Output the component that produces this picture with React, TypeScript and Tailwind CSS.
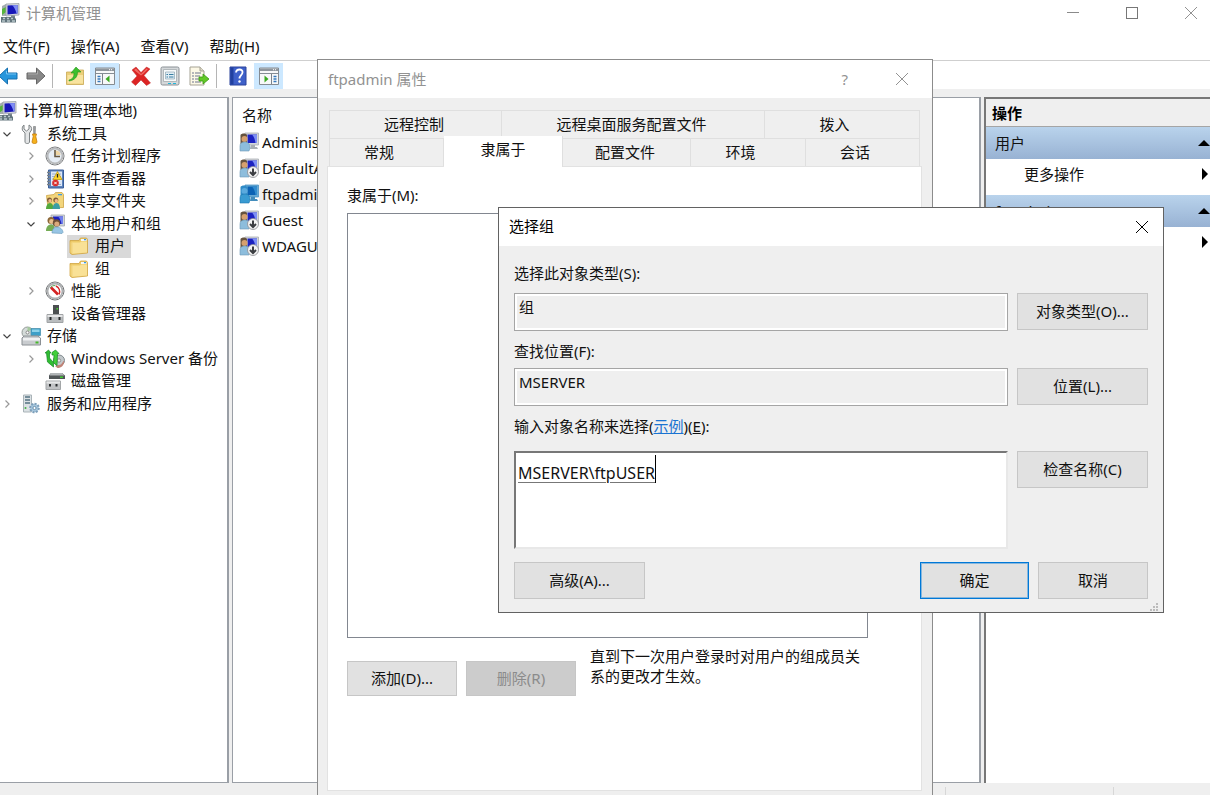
import { useState } from 'react';
import type { ReactNode } from 'react';
import clsx from 'clsx';

type IconProps = { children: ReactNode; className?: string };

function Icon({ children, className }: IconProps) {
  return (
    <svg viewBox="0 0 20 20" aria-hidden="true" className={clsx('h-5 w-5 shrink-0', className)}>
      {children}
    </svg>
  );
}

const ComputerIcon = () => (
  <Icon>
    <path d="M2 3l4-2v12H2z" fill="#a3adaf" />
    <path d="M2 6l4-2v5l-4 3z" fill="#55b53c" />
    <path d="M6 1l13-.5V12L6 13z" fill="#d3d7dc" stroke="#9aa0a8" strokeWidth=".8" />
    <path d="M7.500 2.500l10-.5v8.500l-10 1z" fill="#1717b8" />
    <path d="M12 2.300l5.500-.3v8.500l-1 .1c-1-4-2.500-7-4.500-8.300z" fill="#7f8df5" />
    <path d="M11 12.500h4V15h-4z" fill="#7b878d" />
    <path d="M1 14h13l2 2v3.500H1z" fill="#62757d" />
    <path d="M3 15.500h2m2 0h2m2 0h2M2 18h3m2 0h3m2 0h3" stroke="#b9c7cc" strokeWidth="1.500" />
  </Icon>
);

const ToolsIcon = () => (
  <Icon>
    <path d="M3 1v4l2.500 2L8 5V1c2 1 3 3 2.500 5L8.500 9v9c0 2-4.500 2-4.500 0V9L1.500 6.500C.8 4 1.500 2 3 1z" fill="#e3e5e6" stroke="#7f8486" />
    <path d="M12.500 2.500h2L14.200 10h-1.500z" fill="#9ca1a5" stroke="#777" strokeWidth=".6" />
    <path d="M11.500 10h4l-.7 2.500 1.200 5.500c0 2-5 2-5 0l1.200-5.500z" fill="#f5b21c" stroke="#c57b0c" strokeWidth=".8" />
  </Icon>
);

const ClockIcon = () => (
  <Icon>
    <circle cx="10" cy="10" r="9" fill="#fff" stroke="#77797b" />
    <circle cx="10" cy="10" r="7.500" fill="#e6edf5" stroke="#b8babc" strokeWidth="2" />
    <path d="M11 4.500c3 .3 4.500 2 4.500 4.500H11z" fill="#efd6a4" />
    <path d="M10 4v6.500h5" fill="none" stroke="#665841" strokeWidth="1.600" />
  </Icon>
);

const EventIcon = () => (
  <Icon>
    <path d="M3.500 1h15v18h-15z" fill="#5d83bd" stroke="#3a5f99" />
    <path d="M6 2.500h11V17H6z" fill="#dde7f5" />
    <path d="M7 5h9M7 7.500h9M7 10h9M7 15.500h9" stroke="#9bb0d0" />
    <path d="M12.500 2.500l4.500 8H8z" fill="#fbd529" stroke="#c09205" strokeWidth=".7" />
    <path d="M12.500 5v3.500" stroke="#222" strokeWidth="1.300" />
    <circle cx="10.500" cy="14" r="3.300" fill="#d92c2c" />
    <path d="M9.300 12.800l2.400 2.400m0-2.400l-2.400 2.400" stroke="#fff" />
    <path d="M2 3.500h3m-3 3h3m-3 3h3m-3 3h3m-3 3h3" stroke="#7c8288" strokeWidth="1.300" />
  </Icon>
);

const FolderIcon = () => (
  <Icon>
    <path d="M1 4.500h9l1.500-2.500h6l1 1.500V17L3 18.500 1 17z" fill="#edca67" stroke="#d0a443" strokeWidth=".8" />
    <path d="M12 3h5.500v2H12z" fill="#f4f7fa" />
    <path d="M15 3h2v1.200h-2z" fill="#3c9be0" />
    <path d="M3 6.500h8l1.500-1H18v11L3 17.800z" fill="#f9e196" />
    <path d="M1.500 6l2 1v10.500l-2-1z" fill="#f2d37b" />
  </Icon>
);

const ShareIcon = () => (
  <Icon>
    <path d="M1.500 4.500L9 3.500l1.500-2h6.500l1.500 2v13L3 17z" fill="#f2d57c" stroke="#cda344" strokeWidth=".8" />
    <path d="M13 3h4v1.300h-4z" fill="#3c9be0" />
    <circle cx="4.500" cy="9" r="2.500" fill="#805c37" />
    <circle cx="5" cy="9.800" r="1.700" fill="#edbd89" />
    <circle cx="10.800" cy="9" r="2.500" fill="#805c37" />
    <circle cx="11.300" cy="9.800" r="1.700" fill="#edbd89" />
    <path d="M1 18c0-3 1.500-6 4-6s3.500 3 3.500 6z" fill="#54a93d" />
    <path d="M7.500 18c0-3 1.500-6 4-6s3.500 3 3.500 6z" fill="#3a9ea5" />
  </Icon>
);

const GroupIcon = () => (
  <Icon>
    <path d="M6 1h13.500v11H6z" fill="#d0d4da" stroke="#a3a8ad" strokeWidth=".8" />
    <path d="M8 2.500h10V10H8z" fill="#1b21c0" />
    <path d="M13 2.500h5V10h-1.500c-.5-3-1.500-5.500-3.500-7.500z" fill="#7080ed" />
    <circle cx="6" cy="6.500" r="3.500" fill="#8b6738" />
    <circle cx="6.500" cy="7.500" r="2.400" fill="#eabf8d" />
    <circle cx="11.500" cy="9" r="3.700" fill="#6e4e36" />
    <circle cx="11.800" cy="10" r="2.500" fill="#dba97c" />
    <path d="M1 17c0-4 2-6.500 5-6.500s4 2.500 4 6.500z" fill="#75ac55" />
    <path d="M7 19c0-3.500 2-6 5-6s6 2.500 6 5.500l-1 1z" fill="#98c5e4" stroke="#6497b8" strokeWidth=".6" />
  </Icon>
);

const GaugeIcon = () => (
  <Icon>
    <circle cx="10" cy="10" r="9" fill="#fff" stroke="#6e7173" />
    <circle cx="10" cy="10" r="7.500" fill="#fff" stroke="#aeb0b2" strokeWidth="1.800" />
    <path d="M5 7c1.300-2 3.500-2.800 5.500-2.300" fill="none" stroke="#58a856" />
    <path d="M6 6.500l7 7" stroke="#d42222" strokeWidth="2.600" />
    <path d="M11 5c3 1.500 4.500 5 3 8.500" fill="none" stroke="#d42222" strokeWidth="1.600" />
  </Icon>
);

const DeviceIcon = () => (
  <Icon>
    <path d="M8 1h6v10H8z" fill="#4a4e50" />
    <path d="M11.500 4h1.500v1.500h-1.500z" fill="#47d52e" />
    <path d="M2 10.500h16v8H2z" fill="#b9bcbe" stroke="#a0a3a5" />
    <path d="M2.500 11h15v2h-15z" fill="#e4e5e6" />
    <path d="M4.500 13h2v3h-2zm9 0h2v3h-2z" fill="#26292b" />
  </Icon>
);

const StorageIcon = () => (
  <Icon>
    <circle cx="6.500" cy="6.500" r="5.500" fill="#d4dbd9" stroke="#929996" />
    <path d="M6.500 1a5 5 0 0 1 4 2l-4 3.500z" fill="#a4c99c" />
    <circle cx="6.500" cy="6.500" r="1.500" fill="#fff" stroke="#888" />
    <path d="M10 2.500h9.500v7H10z" fill="#3c9fc8" stroke="#4d93ae" strokeWidth=".8" />
    <path d="M11 3.500h7.500V6H11z" fill="#8dd2e9" />
    <path d="M1 12l2-2h14l2.500 2v7H1z" fill="#c9cccf" stroke="#8b9094" />
    <path d="M2 12h17v2.500H2z" fill="#eff1f2" />
    <path d="M14.500 15.500h3v2h-3z" fill="#48b92d" />
  </Icon>
);

const BackupIcon = () => (
  <Icon>
    <circle cx="14" cy="11.500" r="5.500" fill="#c2c8cb" stroke="#7f898d" />
    <circle cx="14" cy="11.500" r="1.700" fill="#eee" stroke="#777" strokeWidth=".7" />
    <path d="M10 17l6-1.500 3-4c.5 5-3 7.500-6.500 7.500z" fill="#c18276" />
    <path d="M0 4l3.500-3L6 4H4.500v5l4 4.500V18l-6-5L1.500 4z" fill="#31bd32" stroke="#138824" strokeWidth=".7" />
    <path d="M7 3.500L10.500 1 14 4.500h-1.500l-.5 12-3.500-3L9 6H7z" fill="#42d03a" stroke="#168a25" strokeWidth=".7" />
  </Icon>
);

const DiskIcon = () => (
  <Icon>
    <path d="M6 2h11l3 2.500V8H4V4.500z" fill="#505557" />
    <path d="M6 2h11l2.500 2.500h-15z" fill="#b1b5b7" />
    <path d="M15 5.500h3V7h-3z" fill="#40cc30" />
    <path d="M1 10h14.500v8.500H1z" fill="#c1c3c5" stroke="#a3a6a8" />
    <path d="M1.500 10.500h13.500v2H1.500z" fill="#e5e6e7" />
    <path d="M4 13h2v2.500H4zm6.500 0h2v2.500h-2z" fill="#292c2e" />
  </Icon>
);

const ServicesIcon = () => (
  <Icon>
    <path d="M2.500 1h8v17h-8z" fill="#dbe1e4" stroke="#a9b3b8" />
    <path d="M4 3h5M4 6h5M4 9h5" stroke="#557382" strokeWidth="1.300" />
    <circle cx="4.500" cy="14" r="1" fill="#43b045" />
    <circle cx="13.500" cy="14" r="4.300" fill="#a7c7de" stroke="#7d9fba" strokeWidth="2" strokeDasharray="2 1.300" />
    <circle cx="13.500" cy="14" r="1.600" fill="#fff" stroke="#6d92ae" />
  </Icon>
);

type UserState = 'active' | 'disabled' | 'selected';

function UserIcon({ state }: { state: UserState }) {
  const selected = state === 'selected';
  return (
    <Icon>
      <path d="M6 1h13.500v12H6z" fill={selected ? '#66a9d4' : '#d3d6da'} stroke={selected ? '#4c93c2' : '#a9adb2'} strokeWidth=".8" />
      <path d="M8.500 2.500H18V11H8.500z" fill={selected ? '#0b62b4' : '#1c22c0'} />
      <path d="M13 2.500h5V11h-1.500c-.5-3.500-1.500-6.500-3.500-8.500z" fill={selected ? '#328cce' : '#7d8ff5'} />
      <path d="M12 13h4v2h2l1 2h-8z" fill={selected ? '#438dbc' : '#a9afb4'} />
      <path d="M1.500 3c1-2 5.500-2 6.500 0v9H1.500z" fill={selected ? '#2f8cc8' : '#66533f'} />
      <circle cx="5.500" cy="7" r="3" fill={selected ? '#5baade' : '#d6a06e'} />
      <path d="M1 19v-5c0-3 2-4 5-4s5 2 5 6l-1 3z" fill={selected ? '#399bd2' : '#8dbddc'} stroke={selected ? '#1c75ae' : '#6c99b5'} strokeWidth=".6" />
      {state === 'disabled' && (
        <>
          <circle cx="14" cy="14" r="5.500" fill="#f4f4f4" stroke="#8b8d90" strokeWidth=".8" />
          <path d="M14 10.500V17m-3-3l3 3 3-3" fill="none" stroke="#3c3e42" strokeWidth="2" />
        </>
      )}
    </Icon>
  );
}

function ArrowIcon({ forward }: { forward?: boolean }) {
  return (
    <Icon>
      {forward ? (
        <path d="M1 7h9.500V2l8.500 8-8.500 8v-5H1z" fill="#888" stroke="#666" />
      ) : (
        <path d="M19 7H9.500V2L1 10l8.500 8v-5H19z" fill="#2796dc" stroke="#176fae" />
      )}
      <path d={forward ? 'M2 8h9.500V5' : 'M18 8H8.500V5'} fill="none" stroke={forward ? '#aaa' : '#74c4f2'} />
    </Icon>
  );
}

const UpIcon = () => (
  <Icon>
    <path d="M1.500 6h9l2-2h6v14.500h-17z" fill="#ebcf78" stroke="#c9a854" strokeWidth=".8" />
    <path d="M2.500 9H18v8.500H2.500z" fill="#f8e3a0" />
    <path d="M4 14c4-1 5-3.500 5-7H6l5-6 5 5h-3.500c0 5-2.500 8-8.500 9z" fill="#3dbf2e" stroke="#25951d" strokeWidth=".6" />
  </Icon>
);

function PaneIcon({ right }: { right?: boolean }) {
  return (
    <Icon>
      <path d="M.5 2h19v16.500H.5z" fill="#f7f8f9" stroke="#858b91" />
      <path d="M1 2.500h18v2.500H1z" fill="#8f969d" />
      <path d="M1 7.500h18" stroke="#858d95" />
      <path d="M14 3.700h1m1 0h1" stroke="#fff" />
      <path d={right ? 'M12.500 8v10' : 'M7.500 8v10'} stroke="#7c838a" />
      <path d={right ? 'M14.500 10.500h3m-3 2.500h3m-3 2.500h3' : 'M2.500 10.500h3m-3 2.500h3m-3 2.500h3'} stroke="#3478bd" strokeWidth="1.300" />
      <path d={right ? 'M5.500 9.500v7l4-3.500z' : 'M14.500 9.500v7l-4-3.500z'} fill="#3aaa21" />
    </Icon>
  );
}

const DeleteIcon = () => (
  <Icon>
    <path d="M1 4l4-3 5 5.500L15.500 1 19 3l-6 6.500 6.500 7.500-4 2.500L10 14l-5.500 5.500L.5 16 6 10z" fill="#dc2424" stroke="#c03030" strokeWidth=".5" />
    <path d="M3 4l2-1.500 5 5.500 5.500-5.500L17 3l-5 5-2 1.500z" fill="#f06b64" />
  </Icon>
);

const PropsIcon = () => (
  <Icon>
    <rect x="1" y="1" width="18" height="18" rx="1.500" fill="#d5d8da" stroke="#8a9095" />
    <path d="M3.500 3.500h13v12h-13z" fill="#f7fafb" stroke="#a5abaf" strokeWidth=".8" />
    <path d="M5.500 6h9v7h-9z" fill="#e0edf4" stroke="#8fa7b5" strokeWidth=".7" />
    <path d="M6.500 8.500h1.500m1 0h4.500M6.500 11h1.500m1 0h4.500" stroke="#367da2" />
    <path d="M8 17.500h3m2 0h3" stroke="#1fb7dc" />
  </Icon>
);

const ExportIcon = () => (
  <Icon>
    <path d="M1 1h10l4 4v14H1z" fill="#fcf8e6" stroke="#a5a294" />
    <path d="M11 1v4h4" fill="#ddd9c6" stroke="#a5a294" />
    <path d="M3 7h2m1 0h6M3 10h2m1 0h5M3 13h2m1 0h4M3 16h2m1 0h6" stroke="#6e778f" />
    <path d="M10 11h4V8l6 5-6 5v-3h-4z" fill="#62c927" stroke="#3b9915" strokeWidth=".8" />
  </Icon>
);

const HelpIcon = () => (
  <Icon>
    <path d="M2 1h16v18H2z" fill="#3e60c9" stroke="#2a429b" />
    <path d="M2.500 1.500h3v17h-3z" fill="#21409f" />
    <path d="M8 6.500c.3-4 7-4 6.500 0-.2 2.500-3 2.800-3 6" fill="none" stroke="#fff" strokeWidth="1.800" />
    <circle cx="11.500" cy="15.500" r="1.200" fill="#fff" />
  </Icon>
);

function CloseIcon() {
  return (
    <svg viewBox="0 0 14 14" aria-hidden="true" className="h-3.5 w-3.5">
      <path d="M1 1l12 12M13 1L1 13" stroke="currentColor" />
    </svg>
  );
}

type TreeNode = { label: string; level: number; icon: ReactNode; open?: boolean; selected?: boolean };

const TREE: TreeNode[] = [
  { label: '计算机管理(本地)', level: 0, icon: <ComputerIcon /> },
  { label: '系统工具', level: 1, icon: <ToolsIcon />, open: true },
  { label: '任务计划程序', level: 2, icon: <ClockIcon />, open: false },
  { label: '事件查看器', level: 2, icon: <EventIcon />, open: false },
  { label: '共享文件夹', level: 2, icon: <ShareIcon />, open: false },
  { label: '本地用户和组', level: 2, icon: <GroupIcon />, open: true },
  { label: '用户', level: 3, icon: <FolderIcon />, selected: true },
  { label: '组', level: 3, icon: <FolderIcon /> },
  { label: '性能', level: 2, icon: <GaugeIcon />, open: false },
  { label: '设备管理器', level: 2, icon: <DeviceIcon /> },
  { label: '存储', level: 1, icon: <StorageIcon />, open: true },
  { label: 'Windows Server 备份', level: 2, icon: <BackupIcon />, open: false },
  { label: '磁盘管理', level: 2, icon: <DiskIcon /> },
  { label: '服务和应用程序', level: 1, icon: <ServicesIcon />, open: false },
];

const INDENT = ['-ml-6', 'ml-0', 'ml-6', 'ml-12'];

const USERS: { name: string; state: UserState }[] = [
  { name: 'Administrator', state: 'active' },
  { name: 'DefaultAccount', state: 'disabled' },
  { name: 'ftpadmin', state: 'selected' },
  { name: 'Guest', state: 'disabled' },
  { name: 'WDAGUtilityAccount', state: 'disabled' },
];

function TreeRow({ node }: { node: TreeNode }) {
  return (
    <li className={clsx('flex items-center', INDENT[node.level])}>
      <span className="flex w-[19px] shrink-0 pl-[3px]">
        {node.open !== undefined && (
          <svg viewBox="0 0 8 8" aria-hidden="true" className="h-2 w-2">
            <path
              d={node.open ? 'M.5 2.500L4 6l3.500-3.500' : 'M2.500 .5L6 4 2.500 7.500'}
              fill="none"
              stroke={node.open ? '#444' : '#999'}
              strokeWidth="1.200"
            />
          </svg>
        )}
      </span>
      <button type="button" className={clsx('flex h-full items-center gap-[6px] pr-[6px] pl-[2px]', node.selected && 'bg-[#d9d9d9]')}>
        {node.icon}
        <span className="pb-[2px]">{node.label}</span>
      </button>
    </li>
  );
}

function Toolbar() {
  const divider = <span className="h-6 w-px bg-[#b5b5b5]" />;
  return (
    <div className="flex h-[28px] shrink-0 items-center bg-white pt-[2px]">
      <button type="button" aria-label="后退" className="-ml-[2px] mr-2"><ArrowIcon /></button>
      <button type="button" aria-label="前进" className="mr-[6px]"><ArrowIcon forward /></button>
      {divider}
      <button type="button" aria-label="向上" className="mr-[5px] ml-[12px]"><UpIcon /></button>
      <button type="button" aria-label="显示控制台树" className="flex h-full w-[29px] items-center justify-center bg-[#cce8ff]"><PaneIcon /></button>
      {divider}
      <button type="button" aria-label="删除" className="mr-[9px] ml-[11px]"><DeleteIcon /></button>
      <button type="button" aria-label="属性" className="mr-[9px]"><PropsIcon /></button>
      <button type="button" aria-label="导出列表" className="mr-[7px]"><ExportIcon /></button>
      {divider}
      <button type="button" aria-label="帮助" className="mr-[6px] ml-[11px]"><HelpIcon /></button>
      <button type="button" aria-label="显示操作窗格" className="flex h-full w-[29px] items-center justify-center bg-[#cce8ff]"><PaneIcon right /></button>
    </div>
  );
}

function ActionGroup({ title, action }: { title: string; action: string }) {
  return (
    <section>
      <button type="button" className="flex h-8 w-full items-center justify-between bg-linear-to-b from-[#b9d3ec] to-[#98b2d3] pl-[9px]">
        {title}
        <svg viewBox="0 0 12 6" aria-hidden="true" className="h-[6px] w-3"><path d="M6 0l6 6H0z" /></svg>
      </button>
      <button type="button" className="flex h-[36px] w-full items-center justify-between pr-[2px] pb-[6px] pl-[38px]">
        {action}
        <svg viewBox="0 0 6 12" aria-hidden="true" className="h-3 w-[6px]"><path d="M0 0l6 6-6 6z" /></svg>
      </button>
    </section>
  );
}

type Tab = { label: string; width: string };

const BACK_TABS: Tab[] = [
  { label: '远程控制', width: 'w-[172px] pr-[3px]' },
  { label: '远程桌面服务配置文件', width: 'w-[263px] pr-[3px]' },
  { label: '拨入', width: 'flex-1 pr-[15px]' },
];
const FRONT_TABS: Tab[] = [
  { label: '常规', width: 'w-[114px] pr-[15px]' },
  { label: '隶属于', width: 'w-[119px]' },
  { label: '配置文件', width: 'w-[128px] pr-[3px]' },
  { label: '环境', width: 'w-[115px] pr-[15px]' },
  { label: '会话', width: 'flex-1 pr-[15px]' },
];

function PropertiesDialog() {
  const [tab, setTab] = useState('隶属于');

  return (
    <section
      role="dialog"
      aria-label="ftpadmin 属性"
      className="absolute top-[59px] bottom-0 left-[317px] flex w-[616px] flex-col border border-b-0 border-[#8c8c8c] bg-[#efefef]"
    >
      <header className="flex h-[38px] shrink-0 items-center bg-white pr-[23px] pb-px pl-[10px] text-[#929292]">
        <h2 className="flex-1">ftpadmin 属性</h2>
        <button type="button" aria-label="帮助" className="mr-[47px]">?</button>
        <button type="button" aria-label="关闭"><CloseIcon /></button>
      </header>
      <div className="mt-3 mr-[12px] ml-[11px] shrink-0">
        <div className="flex h-7 border-t border-l border-[#dfdfdf]">
          {BACK_TABS.map(t => (
            <button key={t.label} type="button" onClick={() => setTab(t.label)} className={clsx('border-r border-[#dfdfdf] pb-px', t.width)}>
              {t.label}
            </button>
          ))}
        </div>
        <div className="flex h-7 border-t border-l border-[#dfdfdf]">
          {FRONT_TABS.map(t => (
            <button
              key={t.label}
              type="button"
              onClick={() => setTab(t.label)}
              className={clsx('border-r border-[#dfdfdf]', t.width, tab === t.label ? 'z-10 -mt-[3px] -mb-px bg-white pb-[5px]' : 'pb-px')}
            >
              {t.label}
            </button>
          ))}
        </div>
      </div>
      <div className="mr-[10px] mb-[4px] ml-[9px] flex-1 border border-[#e2e2e2] bg-white px-[19px] pt-[18px]">
        <h3 id="member-of" className="leading-5">隶属于(M):</h3>
        <ul aria-labelledby="member-of" className="mt-2 mr-[34px] h-[425px] border border-[#828790]" />
        <div className="mt-2 flex items-start">
          <button type="button" className="mt-[15px] h-[35px] w-[110px] border border-[#c6c6c6] bg-[#e1e1e1] pb-px">添加(D)...</button>
          <button type="button" disabled className="mt-[15px] ml-[9px] h-[35px] w-[110px] border border-[#c6c6c6] bg-[#ccc] pb-px text-[#8b8b8b]">删除(R)</button>
          <p className="ml-[14px] w-[280px] leading-5">直到下一次用户登录时对用户的组成员关系的更改才生效。</p>
        </div>
      </div>
    </section>
  );
}

const BUTTON = 'h-[37px] border border-[#c6c6c6] bg-[#e1e1e1] pb-px';
const READONLY = 'h-[38px] min-w-0 flex-1 border border-[#a5a5a5] bg-[#efefef] pl-1 pb-[11px] shadow-[inset_0_0_0_2px_#fff] outline-none';

function SelectGroupDialog() {
  const [names, setNames] = useState('MSERVER\\ftpUSER');

  return (
    <section
      role="dialog"
      aria-label="选择组"
      className="absolute top-[207px] left-[498px] w-[666px] border border-[#626262] bg-[#efefef]"
    >
      <header className="flex h-[38px] items-center justify-between bg-white pr-[14px] pl-[10px] text-black">
        <h2 className="pb-[2px]">选择组</h2>
        <button type="button" aria-label="关闭"><CloseIcon /></button>
      </header>
      <form className="px-[15px] pb-[13px]" onSubmit={e => e.preventDefault()}>
        <label htmlFor="object-type" className="block pt-[17px] leading-5">选择此对象类型(S):</label>
        <div className="mt-[10px] flex gap-[9px]">
          <input id="object-type" readOnly value="组" className={READONLY} />
          <button type="button" className={clsx(BUTTON, 'w-[131px]')}>对象类型(O)...</button>
        </div>
        <label htmlFor="location" className="mt-[10px] block leading-5">查找位置(F):</label>
        <div className="mt-[7px] flex gap-[9px]">
          <input id="location" readOnly value="MSERVER" className={READONLY} />
          <button type="button" className={clsx(BUTTON, 'w-[131px]')}>位置(L)...</button>
        </div>
        <div className="mt-[10px] leading-5">
          <label htmlFor="names">输入对象名称来选择</label>(<a href="#example" className="text-[#1a73d1] underline">示例</a>)(<u>E</u>):
        </div>
        <div className="mt-[15px] flex items-start gap-[9px]">
          <div className="relative flex flex-1">
            <textarea
              id="names"
              value={names}
              onChange={e => setNames(e.target.value)}
              spellCheck={false}
              className="h-[98px] w-full resize-none border-2 border-t-[#777] border-r-[#e8e8e8] border-b-[#e8e8e8] border-l-[#777] bg-white px-[2px] pt-[10px] text-base leading-5 underline decoration-[#777] underline-offset-3 outline-none"
            />
            <span className="absolute top-1 left-[141px] h-[28px] w-px bg-black" />
          </div>
          <button type="button" className={clsx(BUTTON, 'w-[131px]')}>检查名称(C)</button>
        </div>
        <div className="mt-[13px] flex gap-[9px]">
          <button type="button" className={clsx(BUTTON, 'mr-auto w-[131px]')}>高级(A)...</button>
          <button type="submit" className="h-[37px] w-[109px] border border-[#0078d7] bg-[#e1e1e1] pb-px ring-1 ring-[#0078d7]/40 ring-inset">确定</button>
          <button type="button" className={clsx(BUTTON, 'w-[110px]')}>取消</button>
        </div>
      </form>
      <svg viewBox="0 0 8 8" aria-hidden="true" className="absolute right-[5px] bottom-px h-2 w-2">
        <path d="M6 0h2v2H6zM3 3h2v2H3zM6 3h2v2H6zM0 6h2v2H0zM3 6h2v2H3zM6 6h2v2H6z" fill="#bbb" />
      </svg>
    </section>
  );
}

export default function App() {
  return (
    <div className="relative flex h-screen flex-col overflow-hidden bg-[#efefef] font-['Noto_Sans','Noto_Sans_CJK_SC',sans-serif] text-[15px] leading-5 text-[#111]">
      <header className="flex h-[25px] shrink-0 items-center bg-white pr-3 text-[#929292]">
        <ComputerIcon />
        <h1 className="flex-1 pl-[6px]">计算机管理</h1>
        <div className="flex items-center gap-[45px]">
          <button type="button" aria-label="最小化" className="h-3.5 w-3.5"><span className="block h-px w-3 bg-[#8a8a8a]" /></button>
          <button type="button" aria-label="最大化" className="mr-px h-3 w-3 border border-[#777]" />
          <button type="button" aria-label="关闭"><CloseIcon /></button>
        </div>
      </header>
      <nav className="flex h-[36px] shrink-0 items-center gap-[21px] border-b border-[#cfcfcf] bg-white pt-[6px] pl-[3px]">
        <button type="button">文件(F)</button>
        <button type="button">操作(A)</button>
        <button type="button">查看(V)</button>
        <button type="button">帮助(H)</button>
      </nav>
      <Toolbar />

      <main className="mt-2 flex min-h-0 flex-1 gap-[3px]">
        <nav className="w-[229px] shrink-0 border-t border-r-2 border-b border-[#9a9fa6] bg-white pt-[2px]">
          <ul className="grid h-[315px] auto-rows-fr">
            {TREE.map(node => <TreeRow key={node.label} node={node} />)}
          </ul>
        </nav>
        <div className="min-w-0 flex-1 border border-r-2 border-[#9a9fa6] bg-white">
          <table className="w-full table-fixed text-left">
            <thead>
              <tr className="h-[31px]"><th className="pt-[2px] pl-[9px] font-normal">名称</th></tr>
            </thead>
            <tbody>
              {USERS.map(u => (
                <tr key={u.name} className="h-[26px]">
                  <td>
                    <div className="flex items-center pl-[6px]">
                      <UserIcon state={u.state} />
                      <span className={clsx('py-[3px] pl-[3px]', u.state === 'selected' && 'bg-[#efefef] pr-5')}>{u.name}</span>
                    </div>
                  </td>
                </tr>
              ))}
            </tbody>
          </table>
        </div>
        <aside className="w-[226px] shrink-0 border-t-2 border-l-2 border-[#777] bg-white">
          <h2 className="h-[28px] border-b border-[#a5a5a5] bg-[#efefef] pt-1 pl-[6px] font-bold text-black">操作</h2>
          <ActionGroup title="用户" action="更多操作" />
          <ActionGroup title="ftpadmin" action="更多操作" />
        </aside>
      </main>
      <footer className="flex h-3 shrink-0 justify-end pt-1">
        <span className="w-[168px] border-l border-[#d7d7d7]" />
        <span className="w-[97px] border-l border-[#d7d7d7]" />
      </footer>

      <PropertiesDialog />
      <SelectGroupDialog />
    </div>
  );
}
